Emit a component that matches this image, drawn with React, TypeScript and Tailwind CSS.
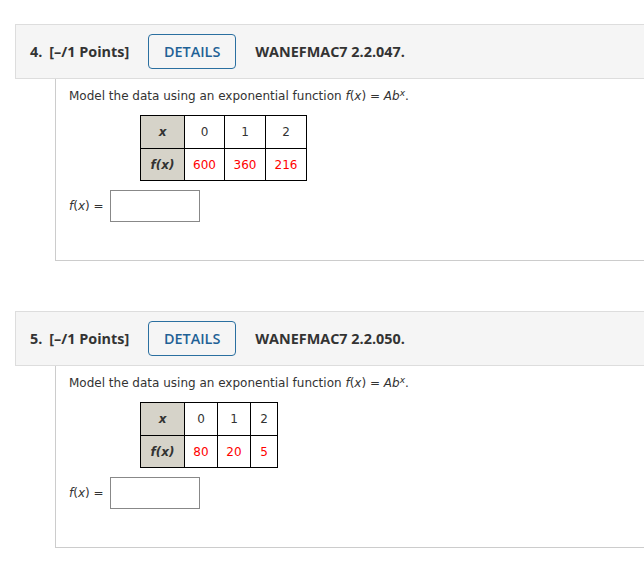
import React from 'react';

type Q = { num: number; code: string; xs: string[]; ys: string[]; widths: number[] };

const questions: Q[] = [
  { num: 4, code: 'WANEFMAC7 2.2.047.', xs: ['0', '1', '2'], ys: ['600', '360', '216'], widths: [40, 41, 41] },
  { num: 5, code: 'WANEFMAC7 2.2.050.', xs: ['0', '1', '2'], ys: ['80', '20', '5'], widths: [33, 33, 27] },
];

const body = { fontFamily: '"DejaVu Sans", Verdana, sans-serif' };
const head = { fontFamily: '"Open Sans", "Noto Sans", sans-serif' };

function Question({ q }: { q: Q }) {
  return (
    <div className="ml-[15px]">
      <div className="h-[55px] bg-[#f5f5f5] border border-r-0 border-[#dddddd] flex items-center pl-[14px] text-[#333] font-bold text-[14.4px]" style={head}>
        <span>{q.num}.</span>
        <span className="ml-[7px]">[–/1 Points]</span>
        <span className="ml-[19px] h-[35px] w-[88px] border border-[#2a6fa0] rounded-[4px] flex items-center justify-center text-[#1f6196] font-semibold">DETAILS</span>
        <span className="ml-[19px]">{q.code}</span>
      </div>
      <div className="ml-[40px] border-l border-b border-[#cccccc] pl-[13px] pt-[9px] pb-[38px] text-[#333] text-[12px]" style={body}>
        <div className="h-[17px] leading-[17px]">
          Model the data using an exponential function <i>f</i>(<i>x</i>) = <i>Ab</i><sup className="italic text-[9px]">x</sup>.
        </div>
        <table className="ml-[71px] mt-[10px] border-collapse">
          <tbody>
            <tr className="h-[33px]">
              <td className="w-[44px] border border-black bg-[#d6d3c9] text-center font-bold italic">x</td>
              {q.xs.map((v, i) => (
                <td key={i} className="border border-black text-center" style={{ width: q.widths[i] }}>{v}</td>
              ))}
            </tr>
            <tr className="h-[32px]">
              <td className="border border-black bg-[#d6d3c9] text-center font-bold italic">f(x)</td>
              {q.ys.map((v, i) => (
                <td key={i} className="border border-black text-center text-[#ff0000]">{v}</td>
              ))}
            </tr>
          </tbody>
        </table>
        <div className="mt-[9px] flex items-center">
          <span><i>f</i>(<i>x</i>) =</span>
          <div className="ml-[6px] w-[90px] h-[32px] border border-[#888] bg-white" />
        </div>
      </div>
    </div>
  );
}

export default function App() {
  return (
    <div className="bg-white min-h-[562px] pt-[24px]">
      <Question q={questions[0]} />
      <div className="h-[50px]" />
      <Question q={questions[1]} />
    </div>
  );
}
